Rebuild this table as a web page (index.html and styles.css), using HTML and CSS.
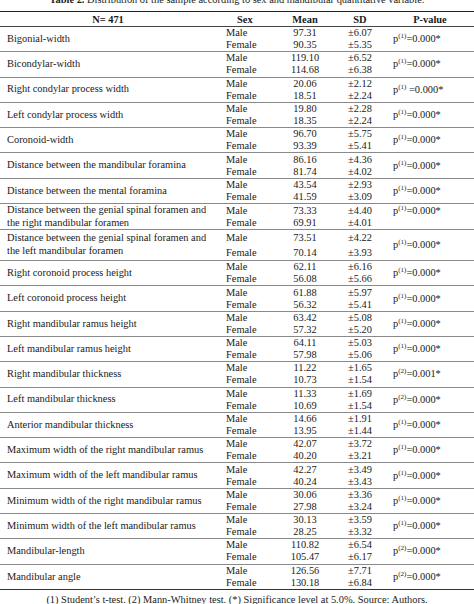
FILE: index.html
```html
<!DOCTYPE html>
<html>
<head>
<meta charset="utf-8">
<link rel="stylesheet" href="styles.css">
</head>
<body>
<div class="page">
  <div class="title"><b>Table 2.</b> Distribution of the sample according to sex and mandibular quantitative variable.</div>
  <table class="data">
    <colgroup>
      <col class="c-label"><col class="c-sex"><col class="c-mean"><col class="c-sd"><col class="c-p">
    </colgroup>
    <thead>
      <tr><th class="h-label">N= 471</th><th class="h-sex">Sex</th><th>Mean</th><th>SD</th><th>P-value</th></tr>
    </thead>
    <tbody>
      <tr><td class="label">Bigonial-width</td><td class="sex"><div>Male</div><div>Female</div></td><td class="num"><div>97.31</div><div>90.35</div></td><td class="num"><div>±6.07</div><div>±5.35</div></td><td class="p">p<sup>(1)</sup>=0.000*</td></tr>
      <tr><td class="label">Bicondylar-width</td><td class="sex"><div>Male</div><div>Female</div></td><td class="num"><div>119.10</div><div>114.68</div></td><td class="num"><div>±6.52</div><div>±6.38</div></td><td class="p">p<sup>(1)</sup>=0.000*</td></tr>
      <tr><td class="label">Right condylar process width</td><td class="sex"><div>Male</div><div>Female</div></td><td class="num"><div>20.06</div><div>18.51</div></td><td class="num"><div>±2.12</div><div>±2.24</div></td><td class="p">p<sup>(1)</sup> =0.000*</td></tr>
      <tr><td class="label">Left condylar process width</td><td class="sex"><div>Male</div><div>Female</div></td><td class="num"><div>19.80</div><div>18.35</div></td><td class="num"><div>±2.28</div><div>±2.24</div></td><td class="p">p<sup>(1)</sup>=0.000*</td></tr>
      <tr><td class="label">Coronoid-width</td><td class="sex"><div>Male</div><div>Female</div></td><td class="num"><div>96.70</div><div>93.39</div></td><td class="num"><div>±5.75</div><div>±5.41</div></td><td class="p">p<sup>(1)</sup>=0.000*</td></tr>
      <tr class="r-wide"><td class="label">Distance between the mandibular foramina</td><td class="sex"><div>Male</div><div>Female</div></td><td class="num"><div>86.16</div><div>81.74</div></td><td class="num"><div>±4.36</div><div>±4.02</div></td><td class="p">p<sup>(1)</sup>=0.000*</td></tr>
      <tr><td class="label">Distance between the mental foramina</td><td class="sex"><div>Male</div><div>Female</div></td><td class="num"><div>43.54</div><div>41.59</div></td><td class="num"><div>±2.93</div><div>±3.09</div></td><td class="p">p<sup>(1)</sup>=0.000*</td></tr>
      <tr><td class="label">Distance between the genial spinal foramen and<br>the right mandibular foramen</td><td class="sex"><div>Male</div><div>Female</div></td><td class="num"><div>73.33</div><div>69.91</div></td><td class="num"><div>±4.40</div><div>±4.01</div></td><td class="p p-top">p<sup>(1)</sup>=0.000*</td></tr>
      <tr class="r-tall"><td class="label label-top">Distance between the genial spinal foramen and<br>the left mandibular foramen</td><td class="sex"><div>Male</div><div>Female</div></td><td class="num"><div>73.51</div><div>70.14</div></td><td class="num"><div>±4.22</div><div>±3.93</div></td><td class="p">p<sup>(1)</sup>=0.000*</td></tr>
      <tr><td class="label">Right coronoid process height</td><td class="sex"><div>Male</div><div>Female</div></td><td class="num"><div>62.11</div><div>56.08</div></td><td class="num"><div>±6.16</div><div>±5.66</div></td><td class="p">p<sup>(1)</sup>=0.000*</td></tr>
      <tr><td class="label">Left coronoid process height</td><td class="sex"><div>Male</div><div>Female</div></td><td class="num"><div>61.88</div><div>56.32</div></td><td class="num"><div>±5.97</div><div>±5.41</div></td><td class="p">p<sup>(1)</sup>=0.000*</td></tr>
      <tr><td class="label">Right mandibular ramus height</td><td class="sex"><div>Male</div><div>Female</div></td><td class="num"><div>63.42</div><div>57.32</div></td><td class="num"><div>±5.08</div><div>±5.20</div></td><td class="p">p<sup>(1)</sup>=0.000*</td></tr>
      <tr><td class="label">Left mandibular ramus height</td><td class="sex"><div>Male</div><div>Female</div></td><td class="num"><div>64.11</div><div>57.98</div></td><td class="num"><div>±5.03</div><div>±5.06</div></td><td class="p">p<sup>(1)</sup>=0.000*</td></tr>
      <tr><td class="label">Right mandibular thickness</td><td class="sex"><div>Male</div><div>Female</div></td><td class="num"><div>11.22</div><div>10.73</div></td><td class="num"><div>±1.65</div><div>±1.54</div></td><td class="p">p<sup>(2)</sup>=0.001*</td></tr>
      <tr><td class="label">Left mandibular thickness</td><td class="sex"><div>Male</div><div>Female</div></td><td class="num"><div>11.33</div><div>10.69</div></td><td class="num"><div>±1.69</div><div>±1.54</div></td><td class="p">p<sup>(2)</sup>=0.000*</td></tr>
      <tr><td class="label">Anterior mandibular thickness</td><td class="sex"><div>Male</div><div>Female</div></td><td class="num"><div>14.66</div><div>13.95</div></td><td class="num"><div>±1.91</div><div>±1.44</div></td><td class="p">p<sup>(1)</sup>=0.000*</td></tr>
      <tr><td class="label">Maximum width of the right mandibular ramus</td><td class="sex"><div>Male</div><div>Female</div></td><td class="num"><div>42.07</div><div>40.20</div></td><td class="num"><div>±3.72</div><div>±3.21</div></td><td class="p">p<sup>(1)</sup>=0.000*</td></tr>
      <tr><td class="label">Maximum width of the left mandibular ramus</td><td class="sex"><div>Male</div><div>Female</div></td><td class="num"><div>42.27</div><div>40.24</div></td><td class="num"><div>±3.49</div><div>±3.43</div></td><td class="p">p<sup>(1)</sup>=0.000*</td></tr>
      <tr><td class="label">Minimum width of the right mandibular ramus</td><td class="sex"><div>Male</div><div>Female</div></td><td class="num"><div>30.06</div><div>27.98</div></td><td class="num"><div>±3.36</div><div>±3.24</div></td><td class="p">p<sup>(1)</sup>=0.000*</td></tr>
      <tr><td class="label">Minimum width of the left mandibular ramus</td><td class="sex"><div>Male</div><div>Female</div></td><td class="num"><div>30.13</div><div>28.25</div></td><td class="num"><div>±3.59</div><div>±3.32</div></td><td class="p">p<sup>(1)</sup>=0.000*</td></tr>
      <tr><td class="label">Mandibular-length</td><td class="sex"><div>Male</div><div>Female</div></td><td class="num"><div>110.82</div><div>105.47</div></td><td class="num"><div>±6.54</div><div>±6.17</div></td><td class="p">p<sup>(2)</sup>=0.000*</td></tr>
      <tr class="last"><td class="label">Mandibular angle</td><td class="sex"><div>Male</div><div>Female</div></td><td class="num"><div>126.56</div><div>130.18</div></td><td class="num"><div>±7.71</div><div>±6.84</div></td><td class="p">p<sup>(2)</sup>=0.000*</td></tr>
    </tbody>
  </table>
  <div class="note">(1) Student’s t-test. (2) Mann-Whitney test. (*) Significance level at 5.0%. Source: Authors.</div>
</div>
</body>
</html>
```

FILE: styles.css
```css
html, body {
  margin: 0;
  padding: 0;
  background: #ffffff;
}

body {
  font-family: "Liberation Serif", "Times New Roman", serif;
  font-size: 10.4px;
  color: #1a1a1a;
  overflow: hidden;
}

.page {
  width: 474px;
}

.title {
  margin-top: -7px;
  height: 13px;
  line-height: 13px;
  text-align: center;
  white-space: nowrap;
  color: #222;
}

.data {
  margin-top: 5px;
  width: 474px;
  border-collapse: collapse;
  table-layout: fixed;
}

.c-label { width: 216px; }
.c-sex { width: 60px; }
.c-mean { width: 58px; }
.c-sd { width: 52px; }
.c-p { width: 88px; }

.data thead tr {
  border-top: 1px solid #222;
  border-bottom: 1px solid #444;
}

.data th {
  height: 14px;
  padding: 0;
  line-height: 13px;
  font-weight: bold;
  text-align: center;
  vertical-align: middle;
}

.data th.h-sex {
  text-align: left;
  padding-left: 21px;
}

.data tbody tr {
  height: 25.3px;
  border-bottom: 1.5px solid #8a8a8a;
}

.data tbody tr.r-tall {
  height: 30px;
}

.data tbody tr.last {
  border-bottom: 1px solid #333;
}

.data td {
  padding: 0;
  vertical-align: middle;
  line-height: 12px;
}

.data td.label {
  padding-left: 7px;
  white-space: nowrap;
  line-height: 12.5px;
}

.data td.label-top {
  vertical-align: top;
  padding-top: 2px;
}

.data td.sex {
  padding-left: 10px;
}

.r-tall td.sex div,
.r-tall td.num div {
  line-height: 15px;
}

.data td.num {
  text-align: center;
}

.data td.p {
  padding-left: 7px;
  white-space: nowrap;
}

.data td.p-top {
  vertical-align: top;
  padding-top: 1px;
}

.data sup {
  font-size: 7px;
  line-height: 0;
  vertical-align: 4px;
}

.note {
  margin-top: 4px;
  line-height: 12px;
  text-align: center;
  white-space: nowrap;
  color: #222;
}
```
